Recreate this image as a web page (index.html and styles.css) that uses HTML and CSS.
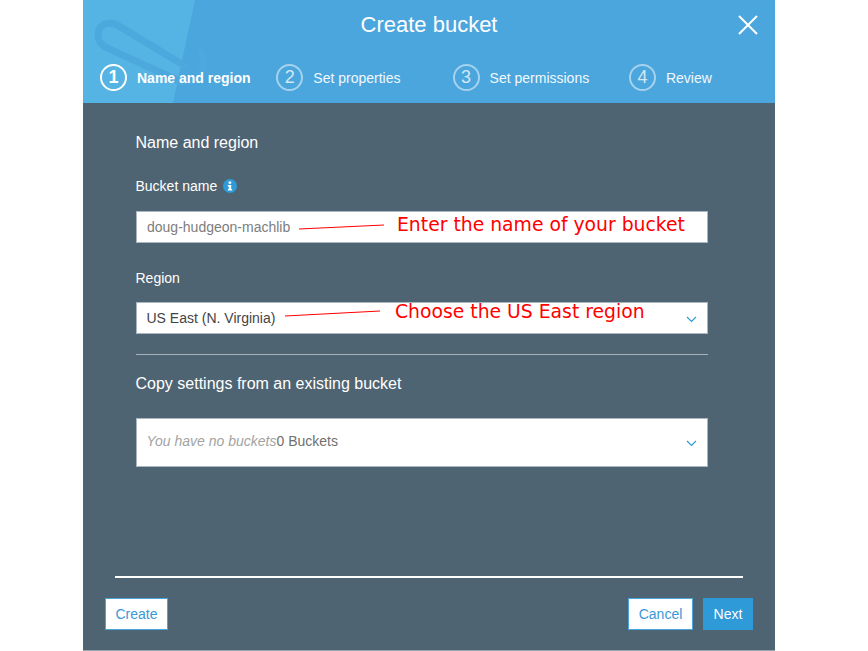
FILE: index.html
```html
<!DOCTYPE html>
<html lang="en">
<head>
<meta charset="utf-8">
<title>Create bucket</title>
<link rel="stylesheet" href="styles.css">
</head>
<body>
<div class="modal">
  <header class="head">
    <svg class="decor" width="130" height="103" viewBox="0 0 130 103">
      <path d="M0 0H112L90 103H0Z" fill="#55b4e3"/>
      <path d="M117 52C122 60 122 72 113 79C108 83 100 83 94 80L22 47C12 41 12 24 27 23C30 23 33 24 36 26L102 66" fill="none" stroke="#4da8de" stroke-width="7" stroke-linecap="round"/>
    </svg>
    <h1 class="title">Create bucket</h1>
    <button class="close" aria-label="Close">
      <svg width="22" height="22" viewBox="0 0 22 22"><path d="M2 2L20 20M20 2L2 20" stroke="#fff" stroke-width="2" fill="none"/></svg>
    </button>
    <ol class="steps">
      <li class="step active"><span class="num">1</span><span>Name and region</span></li>
      <li class="step"><span class="num">2</span><span>Set properties</span></li>
      <li class="step"><span class="num">3</span><span>Set permissions</span></li>
      <li class="step"><span class="num">4</span><span>Review</span></li>
    </ol>
  </header>
  <main class="body">
    <h2 class="section first">Name and region</h2>
    <label class="label">Bucket name
      <svg class="info" width="14" height="14" viewBox="0 0 14 14"><circle cx="7" cy="7" r="7" fill="#2e9ad8"/><path d="M5.6 2.6h2.6v2.2H5.6zM4.8 6h3.4v4.2h1v1.4H4.8v-1.4h1V7.4h-1z" fill="#fff"/></svg>
    </label>
    <div class="field input">doug-hudgeon-machlib
      <svg class="note-line line-a" width="86" height="6" viewBox="0 0 86 6"><path d="M0 5L85 1" stroke="#f00" fill="none"/></svg>
      <span class="note note-a">Enter the name of your bucket</span>
    </div>
    <label class="label region">Region</label>
    <div class="field select">US East (N. Virginia)
      <svg class="note-line line-b" width="96" height="7" viewBox="0 0 96 7"><path d="M0 6L95 1" stroke="#f00" fill="none"/></svg>
      <span class="note note-b">Choose the US East region</span>
      <svg class="chev" width="11" height="7" viewBox="0 0 11 7"><path d="M1 1L5.5 5.5L10 1" stroke="#2e9ad8" stroke-width="1.2" fill="none"/></svg>
    </div>
    <hr class="rule">
    <h2 class="section copy">Copy settings from an existing bucket</h2>
    <div class="field select tall"><em class="hint">You have no buckets</em>0 Buckets
      <svg class="chev" width="11" height="7" viewBox="0 0 11 7"><path d="M1 1L5.5 5.5L10 1" stroke="#2e9ad8" stroke-width="1.2" fill="none"/></svg>
    </div>
  </main>
  <footer class="foot">
    <button class="btn create">Create</button>
    <div class="right">
      <button class="btn cancel">Cancel</button>
      <button class="btn next">Next</button>
    </div>
  </footer>
</div>
</body>
</html>
```

FILE: styles.css
```css
* { box-sizing: border-box; }
html, body { margin: 0; height: 100%; background: #fff; }
body { font-family: "Liberation Sans", Arial, sans-serif; overflow: hidden; }
.modal {
  width: 692px;
  height: 651px;
  margin-left: 83px;
  background: #4f6472;
  display: flex;
  flex-direction: column;
  border-bottom: 1px solid #9aa5ad;
}
.head {
  position: relative;
  height: 103px;
  background: #4ba6dd;
  color: #fff;
  padding-top: 11px;
  overflow: hidden;
  flex: none;
}
.decor { position: absolute; left: 0; top: 0; }
.title {
  position: relative;
  margin: 0;
  font-size: 22px;
  font-weight: 400;
  line-height: 27px;
  text-align: center;
}
.close {
  position: absolute;
  right: 16px;
  top: 14px;
  width: 22px;
  height: 22px;
  padding: 0;
  border: 0;
  background: none;
  display: block;
}
.close svg { display: block; }
.steps {
  position: relative;
  list-style: none;
  margin: 26px 0 0;
  padding: 0 0 0 17px;
  display: grid;
  grid-template-columns: repeat(4, 176.3px);
}
.step {
  display: flex;
  align-items: center;
  gap: 10px;
  font-size: 14px;
  color: #f1f8fd;
}
.num {
  width: 27px;
  height: 27px;
  border: 2px solid rgba(255,255,255,.5);
  border-radius: 50%;
  display: flex;
  align-items: center;
  justify-content: center;
  font-size: 18px;
  color: rgba(255,255,255,.75);
  flex: none;
}
.step.active { font-weight: 700; color: #fff; }
.step.active .num { border-color: #fff; color: #fff; }
.body { flex: 1; padding: 30px 67px 0 52.5px; color: #fff; }
.section { margin: 0; font-size: 16px; font-weight: 400; line-height: 20px; }
.copy { margin-top: 19px; }
.label {
  display: flex;
  align-items: center;
  gap: 6px;
  margin-top: 23px;
  font-size: 14px;
  line-height: 20px;
}
.region { margin-top: 25px; }
.info { flex: none; }
.field {
  position: relative;
  height: 32px;
  margin-top: 15px;
  background: #fff;
  border: 1px solid #aab7c1;
  color: #5f6468;
  font-size: 14px;
  line-height: 30px;
  padding-left: 10px;
}
.input { color: #7d7d7d; margin-left: .5px; }
.region + .field { margin-top: 14px; color: #444; }
.tall { height: 49px; line-height: 45px; margin-top: 24px; color: #6f6f6f; }
.hint { color: #a3a3a3; }
.chev { position: absolute; right: 10px; top: 50%; margin-top: -2px; }
.tall .chev { margin-top: -3px; }
.rule { margin: 20px 0 0; border: 0; border-top: 1px solid #a7b1b8; }
.note {
  position: absolute;
  font-family: "DejaVu Sans", sans-serif;
  font-size: 18.8px;
  line-height: 24px;
  color: #f00;
  white-space: nowrap;
}
.note-line { position: absolute; }
.note-a { left: 260px; top: 1px; }
.line-a { left: 162px; top: 12px; }
.note-b { left: 258.5px; top: -3px; }
.line-b { left: 148px; top: 7px; }
.foot {
  flex: none;
  height: 74px;
  margin: 0 22px;
  padding-top: 22px;
  display: flex;
  justify-content: space-between;
  align-items: flex-start;
  position: relative;
}
.foot::before {
  content: "";
  position: absolute;
  left: 10px;
  right: 10px;
  top: 0;
  border-top: 2px solid #fff;
}
.right { display: flex; gap: 10px; }
.btn {
  height: 32px;
  font: 14px "Liberation Sans", Arial, sans-serif;
  border: 1px solid #4ba6dd;
  background: #fff;
  color: #3b97d8;
  padding: 0;
}
.create { width: 63px; }
.cancel { width: 65px; }
.next { width: 50px; background: #2e9ad8; border-color: #2e9ad8; color: #fff; }
```
